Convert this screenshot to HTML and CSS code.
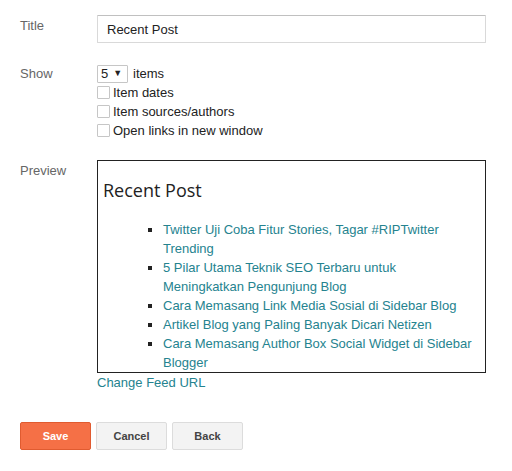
FILE: index.html
```html
<!DOCTYPE html>
<html>
<head>
<meta charset="utf-8">
<link rel="stylesheet" href="styles.css">
</head>
<body>
<div class="form">
  <div class="field field-title">
    <div class="label">Title</div>
    <div class="control">
      <input class="text-input" type="text" value="Recent Post">
    </div>
  </div>
  <div class="field field-show">
    <div class="label">Show</div>
    <div class="control">
      <div class="opt-row">
        <span class="select"><span class="sel-val">5</span><span class="sel-arrow">▼</span></span>
        <span class="opt-text">items</span>
      </div>
      <label class="opt-row"><input class="check" type="checkbox"><span class="opt-text">Item dates</span></label>
      <label class="opt-row"><input class="check" type="checkbox"><span class="opt-text">Item sources/authors</span></label>
      <label class="opt-row"><input class="check" type="checkbox"><span class="opt-text">Open links in new window</span></label>
    </div>
  </div>
  <div class="field field-preview">
    <div class="label label-preview">Preview</div>
    <div class="control">
      <div class="preview">
        <h2 class="preview-title">Recent Post</h2>
        <ul class="post-list">
          <li><a href="#">Twitter Uji Coba Fitur Stories, Tagar #RIPTwitter Trending</a></li>
          <li><a href="#">5 Pilar Utama Teknik SEO Terbaru untuk Meningkatkan Pengunjung Blog</a></li>
          <li><a href="#">Cara Memasang Link Media Sosial di Sidebar Blog</a></li>
          <li><a href="#">Artikel Blog yang Paling Banyak Dicari Netizen</a></li>
          <li><a href="#">Cara Memasang Author Box Social Widget di Sidebar Blogger</a></li>
        </ul>
      </div>
      <a class="feed-link" href="#">Change Feed URL</a>
    </div>
  </div>
  <div class="actions">
    <button class="btn btn-save">Save</button>
    <button class="btn">Cancel</button>
    <button class="btn">Back</button>
  </div>
</div>
</body>
</html>
```
FILE: styles.css
```css
html, body {
  margin: 0;
  padding: 0;
  background: #fff;
}
body {
  font-family: "Liberation Sans", Arial, sans-serif;
  font-size: 13px;
  line-height: 19px;
  color: #222;
}
.form {
  padding: 15px 20px;
}
.field {
  display: grid;
  grid-template-columns: 77px 389px;
}
.field-title {
  margin-bottom: 21px;
}
.field-show {
  margin-bottom: 20px;
}
.label {
  color: #666;
  line-height: 19px;
}
.field-title .label {
  padding-top: 1px;
}
.label-preview {
  padding-top: 1px;
}
.text-input {
  box-sizing: border-box;
  width: 389px;
  height: 28px;
  margin: 0;
  padding: 0 9px;
  border: 1px solid #d9d9d9;
  border-top-color: #c0c0c0;
  border-radius: 1px;
  font-family: "Liberation Sans", Arial, sans-serif;
  font-size: 13px;
  color: #222;
  outline: none;
}
.opt-row {
  display: flex;
  align-items: center;
  height: 19px;
}
.select {
  box-sizing: border-box;
  display: inline-flex;
  align-items: center;
  width: 31px;
  height: 18px;
  border: 1px solid #c6c6c6;
  border-radius: 1px;
  padding-left: 3px;
  margin-right: 5px;
  color: #222;
}
.sel-val {
  font-size: 13px;
}
.sel-arrow {
  font-size: 9px;
  margin-left: 5px;
  line-height: 9px;
}
.check {
  appearance: none;
  -webkit-appearance: none;
  box-sizing: border-box;
  width: 13px;
  height: 13px;
  margin: 0 3px 0 0;
  border: 1px solid #c6c6c6;
  border-radius: 1px;
  background: #fff;
}
.preview {
  box-sizing: border-box;
  width: 389px;
  border: 1px solid #222;
  padding: 0 6px 0 5px;
}
.preview-title {
  margin: 17px 0 18px 0;
  font-family: "Open Sans", sans-serif;
  font-weight: normal;
  font-size: 18px;
  line-height: 24px;
  color: #222;
}
.post-list {
  list-style: square;
  margin: 0;
  padding-left: 60px;
  color: #222;
}
.post-list li {
  line-height: 19px;
}
.post-list a, .feed-link {
  color: #25838f;
  text-decoration: none;
}
.feed-link {
  display: block;
  line-height: 19px;
}
.actions {
  display: flex;
  gap: 5px;
  margin-top: 30px;
}
.btn {
  box-sizing: border-box;
  width: 71px;
  height: 28px;
  margin: 0;
  padding: 0;
  border: 1px solid #dcdcdc;
  border-radius: 2px;
  background: #f3f3f3;
  font-family: "Liberation Sans", Arial, sans-serif;
  font-size: 11px;
  font-weight: bold;
  color: #444;
}
.btn-save {
  background: #f57046;
  border-color: #e05b30;
  color: #fff;
}
```
